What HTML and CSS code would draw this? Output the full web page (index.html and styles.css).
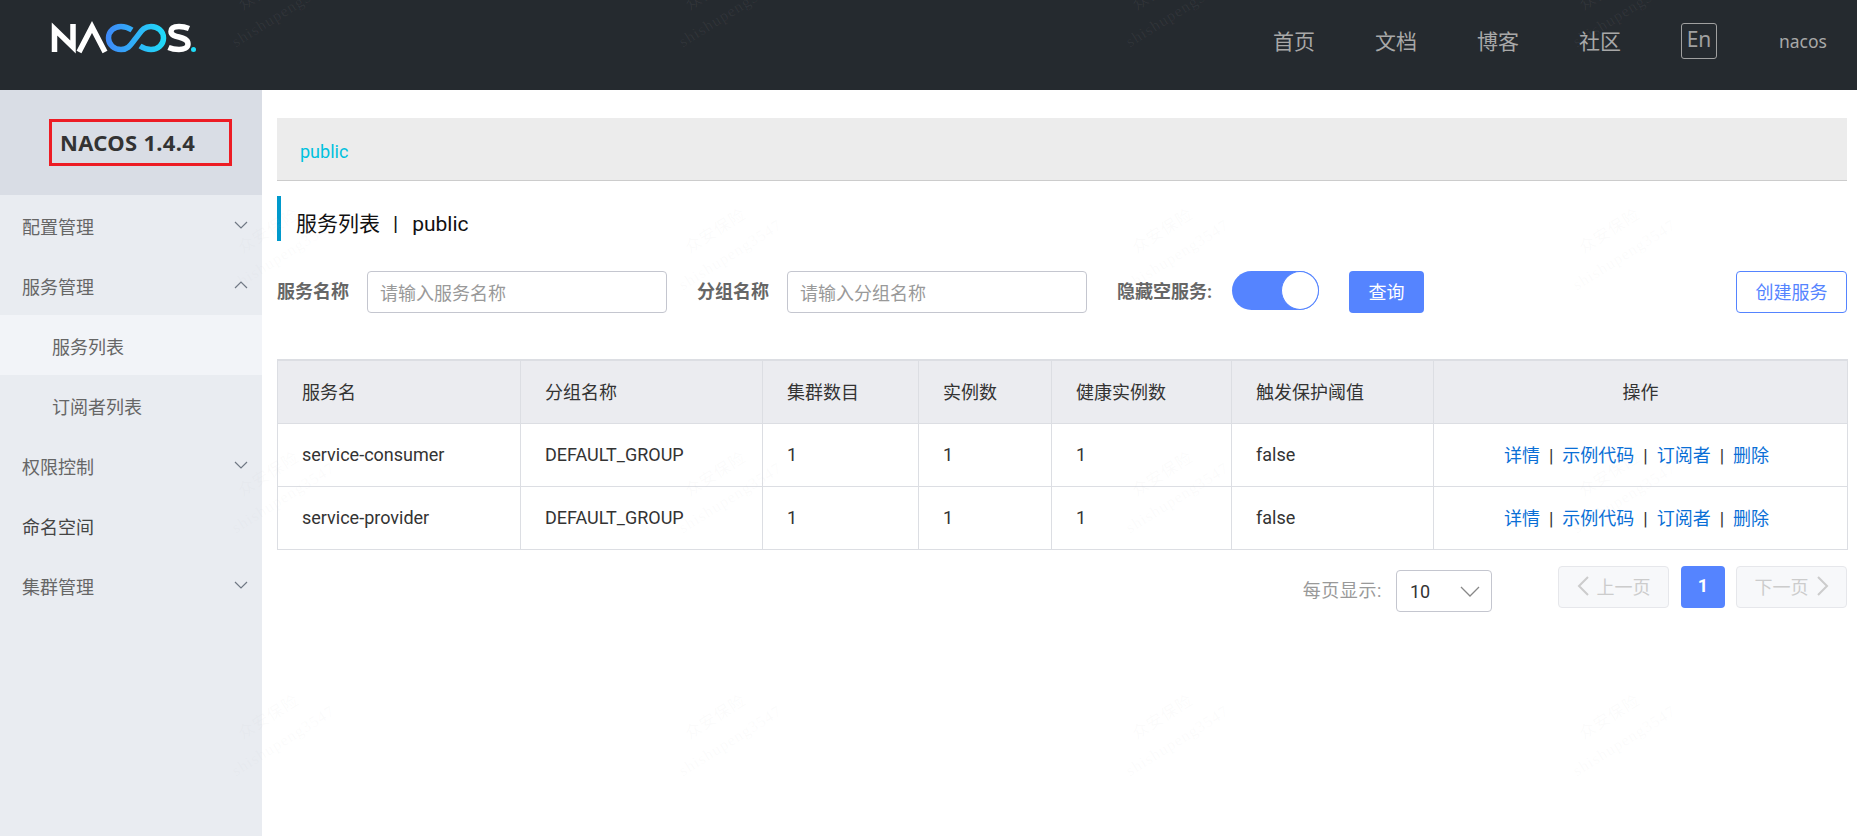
FILE: index.html
```html
<!DOCTYPE html>
<html lang="zh">
<head>
<meta charset="utf-8">
<title>Nacos</title>
<link rel="stylesheet" href="styles.css">
</head>
<body>
<header class="topbar">
  <svg class="logo" width="150" height="34" viewBox="50 20 150 34" aria-label="NACOS">
    <defs>
      <linearGradient id="loop" x1="106" y1="0" x2="166" y2="0" gradientUnits="userSpaceOnUse">
        <stop offset="0" stop-color="#3f88f8"/>
        <stop offset="1" stop-color="#1fdcf8"/>
      </linearGradient>
    </defs>
    <g fill="none" stroke="#fff" stroke-width="5.500">
      <path d="M54.500 52V29L73 47V24"/>
      <path d="M79 52L92 27L105 52"/>
      <path d="M189 28.500Q184 26.500 179 26.500C173 26.500 171 29 171 31.500C171 39 188 35 188 44C188 47.500 184 49.500 179 49.500Q173 49.500 168.500 47.500"/>
    </g>
    <path d="M132 30C128 27.500 125 26.500 121 26.500C114 26.500 108.500 31.500 108.500 38C108.500 44.500 114 49.500 121 49.500C129 49.500 131 44 136 38C141 32 143 26.500 151 26.500C158 26.500 163.500 31.500 163.500 38C163.500 44.500 158 49.500 151 49.500C147 49.500 144 48.500 140 46" fill="none" stroke="url(#loop)" stroke-width="5.500"/>
    <circle cx="193.500" cy="49.500" r="2.500" fill="#1fdcf8"/>
  </svg>
  <nav class="topnav">
    <a class="topnav-link">首页</a>
    <a class="topnav-link">文档</a>
    <a class="topnav-link">博客</a>
    <a class="topnav-link">社区</a>
  </nav>
  <span class="lang">En</span>
  <span class="user">nacos</span>
</header>
<div class="layout">
  <aside class="sidebar">
    <div class="version"><span class="version-box">NACOS 1.4.4</span></div>
    <ul class="menu">
      <li class="menu-item"><span>配置管理</span><svg class="chev" width="14" height="8" viewBox="0 0 14 8"><path d="M1 1l6 6 6-6"/></svg></li>
      <li class="menu-item"><span>服务管理</span><svg class="chev" width="14" height="8" viewBox="0 0 14 8"><path d="M1 7l6-6 6 6"/></svg></li>
      <li class="menu-item sub active"><span>服务列表</span></li>
      <li class="menu-item sub"><span>订阅者列表</span></li>
      <li class="menu-item"><span>权限控制</span><svg class="chev" width="14" height="8" viewBox="0 0 14 8"><path d="M1 1l6 6 6-6"/></svg></li>
      <li class="menu-item plain"><span>命名空间</span></li>
      <li class="menu-item"><span>集群管理</span><svg class="chev" width="14" height="8" viewBox="0 0 14 8"><path d="M1 1l6 6 6-6"/></svg></li>
    </ul>
  </aside>
  <main class="content">
    <div class="crumb"><a class="crumb-link">public</a></div>
    <h1 class="title">服务列表<span class="title-sep">|</span>public</h1>
    <form class="filters">
      <label class="field-label">服务名称</label>
      <input class="field-input" type="text" placeholder="请输入服务名称">
      <label class="field-label second">分组名称</label>
      <input class="field-input" type="text" placeholder="请输入分组名称">
      <label class="field-label third">隐藏空服务:</label>
      <span class="switch"><span class="switch-knob"></span></span>
      <button class="btn primary" type="button">查询</button>
      <button class="btn outline" type="button">创建服务</button>
    </form>
    <table class="grid">
      <colgroup>
        <col class="c1"><col class="c2"><col class="c3"><col class="c4"><col class="c5"><col class="c6"><col class="c7">
      </colgroup>
      <thead>
        <tr><th>服务名</th><th>分组名称</th><th>集群数目</th><th>实例数</th><th>健康实例数</th><th>触发保护阈值</th><th class="center">操作</th></tr>
      </thead>
      <tbody>
        <tr>
          <td>service-consumer</td><td>DEFAULT_GROUP</td><td>1</td><td>1</td><td>1</td><td>false</td>
          <td class="center ops"><a class="op">详情</a><i class="bar">|</i><a class="op">示例代码</a><i class="bar">|</i><a class="op">订阅者</a><i class="bar">|</i><a class="op">删除</a></td>
        </tr>
        <tr>
          <td>service-provider</td><td>DEFAULT_GROUP</td><td>1</td><td>1</td><td>1</td><td>false</td>
          <td class="center ops"><a class="op">详情</a><i class="bar">|</i><a class="op">示例代码</a><i class="bar">|</i><a class="op">订阅者</a><i class="bar">|</i><a class="op">删除</a></td>
        </tr>
      </tbody>
    </table>
    <div class="pager">
      <span class="pager-label">每页显示:</span>
      <span class="pager-select"><span>10</span><svg class="select-chev" width="20" height="11" viewBox="0 0 20 11"><path d="M1 1l9 9 9-9"/></svg></span>
      <button class="page-btn disabled prev" type="button"><svg class="page-chev" width="12" height="20" viewBox="0 0 12 20"><path d="M11 1L2 10l9 9"/></svg>上一页</button>
      <button class="page-btn current" type="button">1</button>
      <button class="page-btn disabled next" type="button">下一页<svg class="page-chev" width="12" height="20" viewBox="0 0 12 20"><path d="M1 1l9 9-9 9"/></svg></button>
    </div>
  </main>
</div>
<div class="marks" aria-hidden="true">
  <div class="mark">众安保险<br>shishupeng3547</div><div class="mark">众安保险<br>shishupeng3547</div><div class="mark">众安保险<br>shishupeng3547</div><div class="mark">众安保险<br>shishupeng3547</div>
  <div class="mark">众安保险<br>shishupeng3547</div><div class="mark">众安保险<br>shishupeng3547</div><div class="mark">众安保险<br>shishupeng3547</div><div class="mark">众安保险<br>shishupeng3547</div>
  <div class="mark">众安保险<br>shishupeng3547</div><div class="mark">众安保险<br>shishupeng3547</div><div class="mark">众安保险<br>shishupeng3547</div><div class="mark">众安保险<br>shishupeng3547</div>
  <div class="mark">众安保险<br>shishupeng3547</div><div class="mark">众安保险<br>shishupeng3547</div><div class="mark">众安保险<br>shishupeng3547</div><div class="mark">众安保险<br>shishupeng3547</div>
</div>
</body>
</html>
```
FILE: styles.css
```css
* { box-sizing: border-box; }
html, body { height: 100%; }
body {
  margin: 0;
  overflow: hidden;
  position: relative;
  background: #fff;
  color: #333;
  font-family: Roboto, "Noto Sans CJK SC", sans-serif;
  font-size: 18px;
}
.topbar {
  height: 90px;
  background: #252a2f;
  display: flex;
  align-items: flex-start;
  padding: 0 30px 0 50px;
}
.logo { flex: none; margin-top: 20px; }
.topnav { margin-left: auto; margin-top: 28px; display: flex; gap: 60px; }
.topnav-link { color: #a8a8a8; font-size: 21px; line-height: 28px; }
.lang {
  margin-left: 60px;
  margin-top: 23px;
  width: 36px;
  height: 36px;
  border: 1px solid #a0a0a0;
  border-radius: 3px;
  color: #a0a0a0;
  font-family: "Noto Sans", sans-serif;
  font-size: 21px;
  line-height: 31px;
  text-align: center;
}
.user {
  margin-left: 62px;
  margin-top: 27px;
  color: #a8a8a8;
  font-family: "Noto Sans", sans-serif;
  font-size: 17.500px;
  line-height: 28px;
}
.layout { display: flex; height: 746px; }
.sidebar { flex: none; width: 262px; background: #e9ecf1; }
.version {
  height: 105px;
  background: #d9dde5;
  padding: 29px 0 0 49px;
}
.version-box {
  display: block;
  width: 183px;
  height: 47px;
  border: 3px solid #ed1c24;
  padding-left: 8px;
  font-family: "Noto Sans", sans-serif;
  font-size: 22px;
  font-weight: 700;
  line-height: 40px;
  color: #333;
  letter-spacing: .3px;
}
.menu { list-style: none; margin: 0; padding: 0; }
.menu-item {
  height: 60px;
  display: flex;
  align-items: center;
  justify-content: space-between;
  padding: 2px 14px 0 22px;
  color: #666;
}
.menu-item.sub { padding-left: 52px; }
.menu-item.active { background: #f2f4f8; }
.menu-item.plain { color: #444; }
.chev { fill: none; stroke: #6f7884; stroke-width: 1.200; margin-top: -2px; }
.content { flex: 1; min-width: 0; padding: 28px 10px 0 15px; }
.crumb {
  height: 63px;
  background: #ececec;
  border-bottom: 1px solid #ccc;
  padding-left: 23px;
  line-height: 67px;
}
.crumb-link { color: #00c1de; }
.title {
  margin: 15px 0 0;
  height: 45px;
  border-left: 4px solid #09c;
  padding-left: 15px;
  font-size: 21px;
  font-weight: 400;
  line-height: 57px;
  color: #111;
}
.title-sep { margin: 0 14px 0 13px; }
.filters { display: flex; align-items: flex-start; height: 42px; margin-top: 30px; }
.field-label { font-weight: 700; color: #666; line-height: 42px; margin-right: 18px; white-space: nowrap; }
.field-label.second { margin-left: 30px; }
.field-label.third { margin-left: 30px; margin-right: 20px; }
.field-input {
  width: 300px;
  height: 42px;
  border: 1px solid #c4c6cf;
  border-radius: 4px;
  padding: 2px 12px 0;
  font: inherit;
  outline: 0;
  background: #fff;
}
.field-input::placeholder { color: #999; }
.switch {
  flex: none;
  width: 87px;
  height: 39px;
  border-radius: 20px;
  background: #5584ff;
  display: flex;
  justify-content: flex-end;
}
.switch-knob {
  width: 38px;
  height: 39px;
  border-radius: 50%;
  background: #fff;
  border: 1px solid #5584ff;
}
.btn {
  height: 42px;
  border-radius: 4px;
  font: inherit;
  padding: 0 0 2px;
}
.btn.primary { width: 75px; margin-left: 30px; background: #5584ff; border: 0; color: #fff; }
.btn.outline { width: 111px; margin-left: auto; background: #fff; border: 1px solid #5584ff; color: #5584ff; }
.grid {
  width: 1570px;
  margin-top: 46px;
  border-collapse: collapse;
  table-layout: fixed;
  border: 1px solid #dcdee3;
  border-top-width: 2px;
  color: #333;
}
.c1 { width: 243px; }
.c2 { width: 242px; }
.c3 { width: 156px; }
.c4 { width: 133px; }
.c5 { width: 180px; }
.c6 { width: 202px; }
.c7 { width: 414px; }
.grid th, .grid td {
  border: 1px solid #dcdee3;
  padding: 0 0 0 24px;
  text-align: left;
  font-weight: 400;
}
.grid th { height: 63px; padding-bottom: 2px; background: #ebecf0; }
.grid td { height: 63px; }
.grid .center { text-align: center; padding-left: 0; }
.grid .ops { padding: 0 8px 2px 0; }
.op { color: #0a6fd6; }
.bar { font-style: normal; margin: 0 9px; }
.pager { display: flex; align-items: flex-start; justify-content: flex-end; margin-top: 16px; }
.pager-label { color: #999; line-height: 42px; margin-top: 4px; margin-right: 14px; letter-spacing: .6px; }
.pager-select {
  width: 96px;
  height: 42px;
  margin-top: 4px;
  margin-right: 66px;
  border: 1px solid #c4c6cf;
  border-radius: 4px;
  display: flex;
  align-items: center;
  justify-content: space-between;
  padding: 2px 11px 0 13px;
}
.select-chev { fill: none; stroke: #888; stroke-width: 1.300; }
.page-btn {
  height: 42px;
  border-radius: 4px;
  padding: 0 0 2px;
  font: inherit;
  display: flex;
  align-items: center;
  justify-content: center;
}
.page-btn.disabled { width: 111px; background: #f7f8fa; border: 1px solid #e6e7eb; color: #ccc; }
.page-btn.current { width: 44px; margin: 0 11px 0 12px; background: #5584ff; border: 0; color: #fff; font-weight: 700; }
.page-chev { fill: none; stroke: #ccc; stroke-width: 2; }
.prev .page-chev { margin-right: 8px; }
.next .page-chev { margin-left: 8px; }
.marks {
  position: absolute;
  left: 52px;
  top: -122px;
  display: grid;
  grid-template-columns: repeat(4, 447px);
  grid-auto-rows: 243px;
  pointer-events: none;
}
.mark {
  align-self: center;
  justify-self: center;
  transform: rotate(-32deg);
  text-align: center;
  white-space: nowrap;
  font-family: "Liberation Serif", "Noto Sans CJK SC", serif;
  font-size: 16px;
  line-height: 28px;
  letter-spacing: 1px;
  color: rgba(200, 200, 205, .07);
}
```
